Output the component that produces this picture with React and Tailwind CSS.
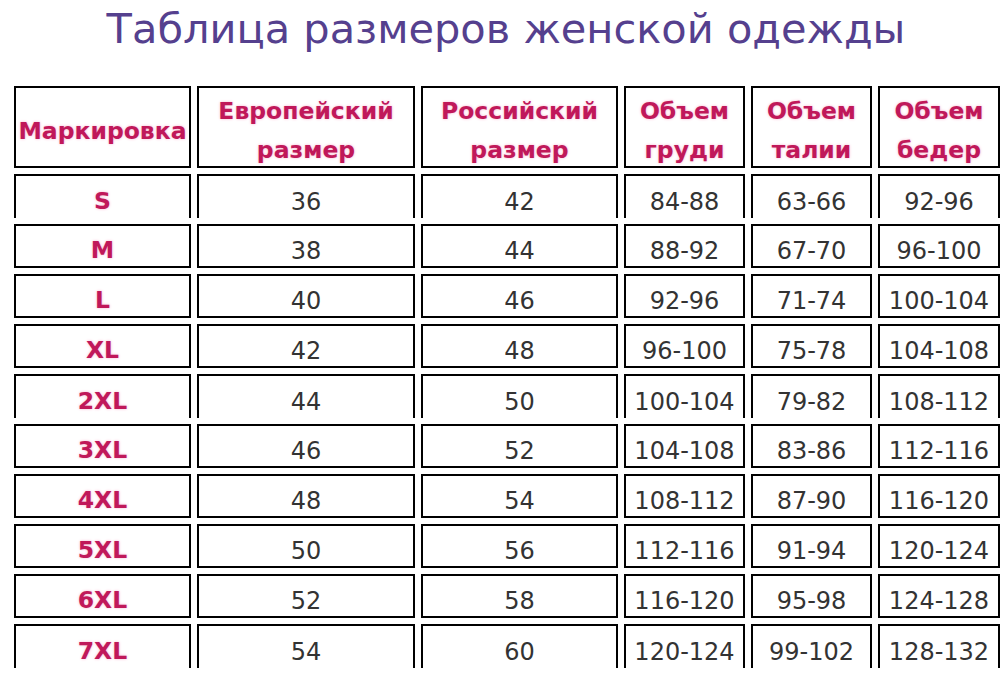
import React from 'react';

// Таблица размеров: маркировка, EU, RU и обхваты (см)
const rows = [
  { mark: 'S', eu: '36', ru: '42', chest: '84-88', waist: '63-66', hips: '92-96', open: true },
  { mark: 'M', eu: '38', ru: '44', chest: '88-92', waist: '67-70', hips: '96-100' },
  { mark: 'L', eu: '40', ru: '46', chest: '92-96', waist: '71-74', hips: '100-104' },
  { mark: 'XL', eu: '42', ru: '48', chest: '96-100', waist: '75-78', hips: '104-108' },
  { mark: '2XL', eu: '44', ru: '50', chest: '100-104', waist: '79-82', hips: '108-112', open: true },
  { mark: '3XL', eu: '46', ru: '52', chest: '104-108', waist: '83-86', hips: '112-116' },
  { mark: '4XL', eu: '48', ru: '54', chest: '108-112', waist: '87-90', hips: '116-120' },
  { mark: '5XL', eu: '50', ru: '56', chest: '112-116', waist: '91-94', hips: '120-124' },
  { mark: '6XL', eu: '52', ru: '58', chest: '116-120', waist: '95-98', hips: '124-128' },
  { mark: '7XL', eu: '54', ru: '60', chest: '120-124', waist: '99-102', hips: '128-132', open: true },
];

const headers = [
  ['Маркировка'],
  ['Европейский', 'размер'],
  ['Российский', 'размер'],
  ['Объем', 'груди'],
  ['Объем', 'талии'],
  ['Объем', 'бедер'],
];

// ширины колонок вместе с рамкой
const widths = ['w-[177px]', 'w-[218px]', 'w-[197px]', 'w-[121px]', 'w-[121px]', 'w-[122px]'];

const font = { fontFamily: '"DejaVu Sans", Verdana, sans-serif' };
const glow = 'text-[#c0185a] [text-shadow:0_0_3px_#f8b4cf]';

function Cell({ children, open, className = '' }) {
  return (
    <div
      className={`shrink-0 border-2 border-black ${open ? 'border-b-0' : ''} flex items-center justify-center bg-white ${className}`}
    >
      {children}
    </div>
  );
}

export default function App() {
  return (
    <div className="w-[1006px] h-[678px] bg-white overflow-hidden" style={font}>
      <h1 className="pt-[4px] pl-[6px] text-center text-[41.5px] leading-[50px] text-[#55408e]">
        Таблица размеров женской одежды
      </h1>

      <div className="mt-[32px] ml-[14px] flex flex-col gap-[6px]">
        <div className="flex gap-[6px]">
          {headers.map((lines, i) => (
            <Cell key={i} className={`${widths[i]} h-[82px]`}>
              <div className="flex flex-col items-center translate-y-[4px]">
                {lines.map((l) => (
                  <span key={l} className={`font-bold text-[23.5px] leading-[39px] whitespace-nowrap ${glow}`}>
                    {l}
                  </span>
                ))}
              </div>
            </Cell>
          ))}
        </div>

        {rows.map((r) => (
          <div key={r.mark} className="flex gap-[6px]">
            <Cell open={r.open} className={`${widths[0]} h-[44px] pt-[10px]`}>
              <span className={`font-bold text-[23.5px] ${glow}`}>{r.mark}</span>
            </Cell>
            {[r.eu, r.ru, r.chest, r.waist, r.hips].map((v, j) => (
              <Cell key={j} open={r.open} className={`${widths[j + 1]} h-[44px] pt-[10px]`}>
                <span className="text-[24px] text-[#333333]">{v}</span>
              </Cell>
            ))}
          </div>
        ))}
      </div>
    </div>
  );
}
